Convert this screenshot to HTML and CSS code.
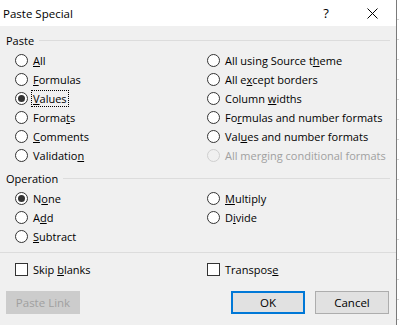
FILE: index.html
```html
<!DOCTYPE html>
<html lang="en">
<head>
    <meta charset="UTF-8" />
    <title>Paste Special</title>
    <link rel="stylesheet" href="styles.css">
</head>
<body>

<div class="screen">
    <div class="dialog">
        <div class="titlebar">
            <span class="title">Paste Special</span>
            <span class="help">?</span>
            <span class="close">
                <svg width="11" height="11" viewBox="0 0 11 11"><path d="M0.5 0.5 L10.5 10.5 M10.5 0.5 L0.5 10.5" stroke="#000" stroke-width="1" fill="none"/></svg>
            </span>
        </div>

        <div class="content">
            <div class="legend"><span>Paste</span><i class="rule"></i></div>
            <div class="options paste-grid">
                <label class="opt"><span class="radio"></span><span><u>A</u>ll</span></label>
                <label class="opt"><span class="radio"></span><span>All using Source t<u>h</u>eme</span></label>
                <label class="opt"><span class="radio"></span><span><u>F</u>ormulas</span></label>
                <label class="opt"><span class="radio"></span><span>All e<u>x</u>cept borders</span></label>
                <label class="opt"><span class="radio on"></span><span class="focus"><u>V</u>alues</span></label>
                <label class="opt"><span class="radio"></span><span>Column <u>w</u>idths</span></label>
                <label class="opt"><span class="radio"></span><span>Forma<u>t</u>s</span></label>
                <label class="opt"><span class="radio"></span><span>Fo<u>r</u>mulas and number formats</span></label>
                <label class="opt"><span class="radio"></span><span><u>C</u>omments</span></label>
                <label class="opt"><span class="radio"></span><span>Val<u>u</u>es and number formats</span></label>
                <label class="opt"><span class="radio"></span><span>Validatio<u>n</u></span></label>
                <label class="opt disabled"><span class="radio"></span><span>All merging conditional formats</span></label>
            </div>

            <div class="legend op-legend"><span>Operation</span><i class="rule"></i></div>
            <div class="options">
                <label class="opt"><span class="radio on"></span><span>N<u>o</u>ne</span></label>
                <label class="opt"><span class="radio"></span><span><u>M</u>ultiply</span></label>
                <label class="opt"><span class="radio"></span><span>A<u>d</u>d</span></label>
                <label class="opt"><span class="radio"></span><span>D<u>i</u>vide</span></label>
                <label class="opt"><span class="radio"></span><span><u>S</u>ubtract</span></label>
            </div>
            <div class="group-end"></div>

            <div class="options checks">
                <label class="opt"><span class="check"></span><span>Skip <u>b</u>lanks</span></label>
                <label class="opt"><span class="check"></span><span>Transpos<u>e</u></span></label>
            </div>

            <div class="buttons">
                <button class="btn disabled-btn">Paste Link</button>
                <span class="spacer"></span>
                <button class="btn default-btn">OK</button>
                <button class="btn">Cancel</button>
            </div>
        </div>
    </div>
    <div class="sheet-edge"></div>
</div>

</body>
</html>
```

FILE: styles.css
```css
body {
    margin: 0;
    font-family: "Open Sans", "Noto Sans", sans-serif;
    font-size: 11px;
    color: #000;
    background: #fff;
}

.screen {
    display: flex;
    width: 399px;
    height: 325px;
    overflow: hidden;
}

.dialog {
    width: 397px;
    height: 325px;
    background: #f0f0f0;
    border-right: 1px solid #7a7a7a;
    box-sizing: border-box;
}

.sheet-edge {
    flex: 1;
    background: repeating-linear-gradient(to bottom, #fff 0, #fff 19px, #d4d4d4 19px, #d4d4d4 20px);
}

.titlebar {
    height: 26px;
    background: #fff;
    display: flex;
    align-items: center;
    padding-left: 3px;
}

.title {
    flex: 1;
    font-size: 11.5px;
}

.help {
    width: 10px;
    text-align: center;
    margin-right: 36px;
    font-size: 13px;
}

.close {
    display: flex;
    margin-right: 18px;
}

.content {
    padding: 0 6px 0 6px;
}

.legend {
    display: flex;
    align-items: center;
    height: 14px;
    margin-top: 7px;
}

.legend .rule {
    flex: 1;
    border-top: 1px solid #dcdcdc;
    margin-left: 5px;
}

.op-legend {
    margin-top: 6px;
}

.options {
    display: grid;
    grid-template-columns: 192px 1fr;
    grid-auto-rows: 19px;
    padding-left: 9px;
    margin-top: 4px;
}

.opt {
    display: flex;
    align-items: center;
    white-space: nowrap;
}

.radio {
    width: 11px;
    height: 11px;
    border: 1px solid #333;
    border-radius: 50%;
    background: #fff;
    margin-right: 5px;
    display: flex;
    align-items: center;
    justify-content: center;
    flex-shrink: 0;
}

.radio.on::after {
    content: "";
    width: 7px;
    height: 7px;
    border-radius: 50%;
    background: #333;
}

.disabled {
    color: #a0a0a0;
}

.disabled .radio {
    border-color: #cfcfcf;
    background: #f0f0f0;
}

.focus {
    outline: 1px dotted #000;
    outline-offset: 0;
    padding: 0 1px;
    margin-left: -1px;
}

.group-end {
    border-top: 1px solid #dcdcdc;
    margin: 6px -6px 0 -6px;
}

.checks {
    margin-top: 7px;
}

.check {
    width: 11px;
    height: 11px;
    border: 1px solid #333;
    background: #fff;
    margin-right: 5px;
    flex-shrink: 0;
}

.buttons {
    display: flex;
    margin-top: 12px;
    padding-right: 1px;
}

.spacer {
    flex: 1;
}

.btn {
    font-family: inherit;
    font-size: 11.5px;
    height: 23px;
    width: 74px;
    background: #e1e1e1;
    border: 1px solid #adadad;
    padding: 0;
    color: #000;
}

.disabled-btn {
    background: #cccccc;
    border-color: #cccccc;
    color: #a0a0a0;
}

.default-btn {
    border: 2px solid #0078d7;
    margin-right: 10px;
}
```
